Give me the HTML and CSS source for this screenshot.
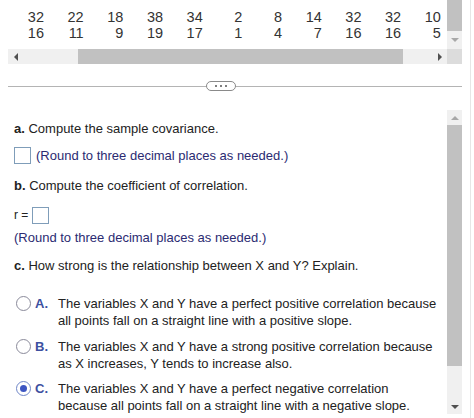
FILE: index.html
```html
<!DOCTYPE html>
<html>
<head>
<meta charset="utf-8">
<link rel="stylesheet" href="styles.css">
</head>
<body>
<div class="page">
  <div class="tablewrap">
    <div class="tablecol">
      <div class="grid">
        <span>32</span><span>22</span><span>18</span><span>38</span><span>34</span><span>2</span><span>8</span><span>14</span><span>32</span><span>32</span><span>10</span>
        <span>16</span><span>11</span><span>9</span><span>19</span><span>17</span><span>1</span><span>4</span><span>7</span><span>16</span><span>16</span><span>5</span>
      </div>
      <div class="hscroll">
        <div class="harrow left"></div>
        <div class="htrack"><div class="hthumb"></div></div>
        <div class="harrow right"></div>
      </div>
    </div>
    <div class="vscroll-top">
      <div class="vthumb-top"></div>
      <div class="vbtn"><span class="tri down light"></span></div>
      <div class="corner"></div>
    </div>
  </div>

  <div class="sep">
    <div class="pill"><i></i><i></i><i></i></div>
  </div>

  <div class="panel">
    <div class="content">
      <p class="q qa"><b>a.</b> Compute the sample covariance.</p>
      <div class="ansrow r1"><span class="box"></span><span class="hint">(Round to three decimal places as needed.)</span></div>
      <p class="q qb"><b>b.</b> Compute the coefficient of correlation.</p>
      <div class="ansrow r2"><span class="req">r =</span><span class="box"></span></div>
      <p class="hint hint2">(Round to three decimal places as needed.)</p>
      <p class="q qc"><b>c.</b> How strong is the relationship between X and Y? Explain.</p>
      <div class="opt oa">
        <span class="radio"></span><span class="lab">A.</span>
        <span class="otext">The variables X and Y have a perfect positive correlation because<br>all points fall on a straight line with a positive slope.</span>
      </div>
      <div class="opt ob">
        <span class="radio"></span><span class="lab">B.</span>
        <span class="otext">The variables X and Y have a strong positive correlation because<br>as X increases, Y tends to increase also.</span>
      </div>
      <div class="opt oc">
        <span class="radio on"></span><span class="lab">C.</span>
        <span class="otext">The variables X and Y have a perfect negative correlation<br>because all points fall on a straight line with a negative slope.</span>
      </div>
    </div>
    <div class="vscroll">
      <div class="vbtn2"><span class="tri up light"></span></div>
      <div class="vthumb"></div>
      <div class="vtrack"></div>
      <div class="vbtn2"><span class="tri down dark"></span></div>
    </div>
  </div>
  <div class="edge"></div>
</div>
</body>
</html>
```
FILE: styles.css
```css
* { box-sizing: border-box; }
html, body { margin: 0; padding: 0; background: #fff; }
body {
  font-family: "Liberation Sans", Arial, sans-serif;
  font-size: 13px;
  color: #222;
  width: 474px;
  height: 418px;
  overflow: hidden;
}
.page { position: relative; width: 474px; height: 418px; }
.edge {
  position: absolute; top: 0; bottom: 0; left: 470px; width: 1px; background: #e6e6e6;
}
.tablewrap { display: flex; margin-left: 8px; width: 454px; height: 64px; }
.tablecol { flex: 1; display: flex; flex-direction: column; }
.grid {
  height: 49px;
  padding-top: 9px;
  display: grid;
  grid-template-columns: 36px repeat(10, 39.7px);
  grid-auto-rows: 16px;
  line-height: 16px;
  color: #333;
  font-size: 14.5px;
}
.grid span { text-align: right; }
.hscroll { height: 15px; display: flex; background: #f0f0f0; }
.harrow { width: 15px; position: relative; }
.harrow.left::after, .harrow.right::after {
  content: ""; position: absolute; top: 4px; width: 0; height: 0;
  border-top: 4px solid transparent; border-bottom: 4px solid transparent;
}
.harrow.left::after { left: 6px; border-right: 4px solid #505050; }
.harrow.right::after { left: 6px; border-left: 4px solid #505050; }
.htrack { flex: 1; padding-left: 55px; padding-right: 29px; }
.hthumb { height: 15px; background: #c1c1c1; }
.vscroll-top { width: 15px; display: flex; flex-direction: column; background: #f0f0f0; }
.vthumb-top { height: 31px; background: #c1c1c1; }
.vbtn { height: 18px; display: flex; align-items: center; justify-content: center; }
.corner { height: 15px; background: #dcdcdc; }
.tri { width: 0; height: 0; border-left: 4px solid transparent; border-right: 4px solid transparent; }
.tri.down { border-top: 4px solid #505050; }
.tri.up { border-bottom: 4px solid #505050; }
.tri.down.light { border-top-color: #a8a8a8; }
.tri.up.light { border-bottom-color: #a8a8a8; }

.sep { margin: 22px 0 0 8px; width: 454px; height: 1px; background: #b4b4b4; position: relative; }
.pill {
  position: absolute; left: 198px; top: -5px; width: 30px; height: 10px;
  border: 1px solid #8a8a8a; border-radius: 5px; background: #fff;
  display: flex; align-items: center; justify-content: center; gap: 3px;
}
.pill i { width: 2px; height: 2px; border-radius: 1px; background: #555; display: block; }

.panel { display: flex; margin-top: 23px; margin-left: 8px; width: 454px; height: 304px; }
.content { flex: 1; min-width: 0; padding-left: 6px; line-height: 17px; }
.content p { margin: 0; }
.q b { font-weight: bold; }
.qa { margin-top: 10px !important; }
.ansrow { display: flex; align-items: center; height: 17px; }
.r1 { margin-top: 10px; }
.box { width: 17px; height: 17px; border: 1px solid #7f9db9; background: #fff; display: inline-block; }
.r1 .hint { margin-left: 5px; }
.hint { color: #2b2b72; }
.qb { margin-top: 13px !important; }
.r2 { margin-top: 13px; height: 17px; }
.req { font-size: 12px; margin-right: 4px; }
.hint2 { margin-top: 5px !important; }
.qc { margin-top: 11px !important; }
.opt { display: flex; align-items: flex-start; font-size: 13px; }
.oa { margin-top: 21px; }
.ob { margin-top: 9px; }
.oc { margin-top: 8px; }
.radio {
  width: 15px; height: 15px; border-radius: 50%; border: 1px solid #8a8a9a;
  margin: 1px 0 0 2px; flex: none; position: relative; background: #fff;
}
.radio.on { border-color: #6f86c8; }
.radio.on::after {
  content: ""; position: absolute; left: 3px; top: 3px; width: 7px; height: 7px;
  border-radius: 50%; background: #3d56c2;
}
.lab { color: #3d50a0; font-weight: bold; width: 23px; margin-left: 4px; flex: none; }
.otext { white-space: nowrap; }

.vscroll { width: 15px; display: flex; flex-direction: column; background: #f0f0f0; flex: none; }
.vbtn2 { height: 15px; flex: none; display: flex; align-items: center; justify-content: center; }
.vthumb { height: 241px; background: #c1c1c1; flex: none; }
.vtrack { flex: 1; }
```
